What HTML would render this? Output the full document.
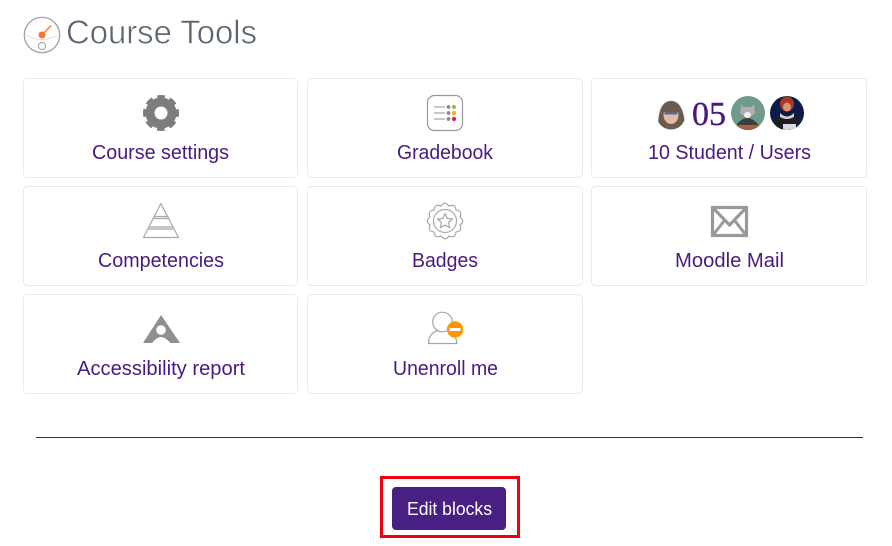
<!DOCTYPE html>
<html><head><meta charset="utf-8"><style>
html,body{margin:0;padding:0;background:#fff;width:892px;height:546px;overflow:hidden}
svg{display:block}
.l{font-family:"Liberation Sans",sans-serif;font-size:20px;fill:#4a1a80}
.c{fill:#fff;stroke:#eaeaea;stroke-width:1}
.i{fill:none;stroke:#a8a8a8;stroke-width:1.2;stroke-linejoin:round}
</style></head><body>
<svg width="892" height="546" viewBox="0 0 892 546" xmlns="http://www.w3.org/2000/svg">
<!-- heading icon -->
<circle cx="42" cy="35" r="17.7" fill="#fff" stroke="#a5a5a5" stroke-width="1.4"/>
<path d="M26 35 Q42 44 58 35" fill="none" stroke="#dcdcdc" stroke-width="1"/>
<circle cx="42" cy="46" r="3.6" fill="none" stroke="#a5a5a5" stroke-width="1.1"/>
<path d="M42 35 L51 25.500" stroke="#ff8a50" stroke-width="1.7"/>
<circle cx="42" cy="35" r="3.500" fill="#ff7433"/>
<text x="66" y="43.500" font-family="'Liberation Sans',sans-serif" font-size="33" fill="#5a6571" stroke="#fff" stroke-width="0.6" textLength="191" lengthAdjust="spacingAndGlyphs">Course Tools</text>

<!-- cards -->
<rect class="c" x="23.5" y="78.5" width="274" height="99" rx="4"/>
<rect class="c" x="307.5" y="78.5" width="275" height="99" rx="4"/>
<rect class="c" x="591.5" y="78.5" width="275" height="99" rx="4"/>
<rect class="c" x="23.5" y="186.5" width="274" height="99" rx="4"/>
<rect class="c" x="307.5" y="186.5" width="275" height="99" rx="4"/>
<rect class="c" x="591.5" y="186.5" width="275" height="99" rx="4"/>
<rect class="c" x="23.5" y="294.5" width="274" height="99" rx="4"/>
<rect class="c" x="307.5" y="294.5" width="275" height="99" rx="4"/>

<!-- labels -->
<text class="l" x="92" y="159" textLength="137" lengthAdjust="spacingAndGlyphs">Course settings</text>
<text class="l" x="397" y="159" textLength="96" lengthAdjust="spacingAndGlyphs">Gradebook</text>
<text class="l" x="648" y="159" textLength="163" lengthAdjust="spacingAndGlyphs">10 Student / Users</text>
<text class="l" x="98" y="267" textLength="126" lengthAdjust="spacingAndGlyphs">Competencies</text>
<text class="l" x="412" y="267" textLength="66" lengthAdjust="spacingAndGlyphs">Badges</text>
<text class="l" x="675" y="267" textLength="109" lengthAdjust="spacingAndGlyphs">Moodle Mail</text>
<text class="l" x="77" y="375" textLength="168" lengthAdjust="spacingAndGlyphs">Accessibility report</text>
<text class="l" x="393" y="375" textLength="105" lengthAdjust="spacingAndGlyphs">Unenroll me</text>

<!-- gear -->
<g transform="translate(161 113)" fill="none" stroke="#7d7d7d">
<circle r="11" stroke-width="9"/>
<circle r="16" stroke-width="4" stroke-dasharray="7.6 4.97" stroke-dashoffset="3.8" transform="rotate(-90)"/>
</g>

<!-- gradebook -->
<rect x="427.5" y="95.5" width="35" height="35" rx="7" fill="#fff" stroke="#999" stroke-width="1.2"/>
<path d="M434 107h11M434 113h11M434 119h11" stroke="#a8a8a8" stroke-width="1.3"/>
<circle cx="448.500" cy="107" r="1.900" fill="#8a8a8a"/><circle cx="448.500" cy="113" r="1.900" fill="#8a8a8a"/><circle cx="448.500" cy="119" r="1.900" fill="#8a8a8a"/>
<circle cx="454" cy="107" r="2.100" fill="#8cc63f"/><circle cx="454" cy="113" r="2.100" fill="#ffa726"/><circle cx="454" cy="119" r="2.100" fill="#f0145a"/>

<!-- users -->
<clipPath id="a1"><circle cx="671" cy="115" r="14.500"/></clipPath>
<g clip-path="url(#a1)">
<rect x="655" y="99" width="32" height="32" fill="#f7f5f3"/>
<path d="M658 128 Q658 101 671 101 Q684 101 685 128Z" fill="#6b5a4e"/>
<ellipse cx="671" cy="115" rx="7.500" ry="9" fill="#e2bba6"/>
<path d="M664 108 Q671 103 678 109 L678 112 L664 112Z" fill="#6b5a4e"/>
<rect x="664.500" y="112" width="13" height="2.500" fill="#5a6a8a"/>
<path d="M658 131 Q671 122 684 131Z" fill="#6a5f60"/>
</g>
<text x="692" y="125" font-family="'Liberation Serif',serif" font-size="34" fill="#4a1a80" stroke="#4a1a80" stroke-width="0.4" textLength="34" lengthAdjust="spacingAndGlyphs">05</text>
<circle cx="748" cy="113" r="17" fill="#6f9a8c"/>
<clipPath id="a2"><circle cx="748" cy="113" r="17"/></clipPath>
<g clip-path="url(#a2)">
<path d="M737 124 Q747 112 758 124 V130 H737Z" fill="#3b3f3e"/>
<path d="M741 104 L743 107 H751 L754 104 L755 113 Q748 121 740 113Z" fill="#b3aeab"/>
<ellipse cx="747.500" cy="115" rx="3.500" ry="3" fill="#f0f0f0"/>
<rect x="730" y="125" width="36" height="6" fill="#a5623f"/>
</g>
<circle cx="787" cy="113" r="17" fill="#0d1a4a"/>
<clipPath id="a3"><circle cx="787" cy="113" r="17"/></clipPath>
<g clip-path="url(#a3)">
<path d="M776 131 V117 Q787 111 798 117 V131Z" fill="#1c1c22"/>
<path d="M780 113 Q787 120 794 113 V117 Q787 121 780 117Z" fill="#cfcfd4"/>
<ellipse cx="787" cy="104" rx="7" ry="7.500" fill="#a83a22"/>
<ellipse cx="787" cy="107" rx="4" ry="4.500" fill="#d9957c"/>
<rect x="783" y="124" width="13" height="6" fill="#d8d8e2"/>
</g>

<!-- competencies -->
<path class="i" d="M160.800 203.500 L178.500 237.500 H143.500Z"/>
<path class="i" d="M153.500 216.500 H168.500 M152.500 218.500 H169.500 M148.500 227 H173.500 M147.500 229 H174.500"/>

<!-- badges -->
<g transform="translate(445 221)">
<path class="i" stroke-width="1" d="M-4.010 -14.970 Q0 -20.500 4.010 -14.970 Q10.250 -17.750 10.960 -10.960 Q17.750 -10.250 14.970 -4.010 Q20.500 0 14.970 4.010 Q17.750 10.250 10.960 10.960 Q10.250 17.750 4.010 14.970 Q0 20.500 -4.010 14.970 Q-10.250 17.750 -10.960 10.960 Q-17.750 10.250 -14.970 4.010 Q-20.500 0 -14.970 -4.010 Q-17.750 -10.250 -10.960 -10.960 Q-10.250 -17.750 -4.010 -14.970Z"/>
<circle class="i" r="11.500" stroke-width="1"/>
<path class="i" stroke-width="1" d="M0-7.500 L2.200-2.600 7.500-2 3.500 1.500 4.600 6.700 0 4-4.600 6.700-3.500 1.500-7.500-2-2.200-2.600Z"/>
</g>

<!-- mail -->
<rect x="712.500" y="207.500" width="34" height="28" fill="none" stroke="#999" stroke-width="3.200"/>
<path d="M713.500 208.500 L729.500 225 L745.500 208.500" fill="none" stroke="#999" stroke-width="3.200"/>
<path d="M713.500 234.500 L724 221 M745.500 234.500 L735 221" fill="none" stroke="#999" stroke-width="3"/>

<!-- accessibility -->
<path d="M161 315 L180 343 H170.500 Q165 337 161 337 Q157 337 152 343 H143Z" fill="#8f8f8f"/>
<circle cx="161" cy="330" r="4.800" fill="#fff"/>

<!-- unenroll -->
<path d="M428.500 343.500 Q428.500 333 439 330 H446 Q456 333 457 343.500Z" fill="#fff" stroke="#a5a5a5" stroke-width="1.200"/>
<circle cx="442.500" cy="322" r="9.800" fill="#fff" stroke="#a5a5a5" stroke-width="1.200"/>
<circle cx="455" cy="329.500" r="8.200" fill="#ff9800"/>
<rect x="449.500" y="328" width="11" height="3" fill="#fff"/>

<!-- footer -->
<rect x="36" y="437" width="827" height="1" fill="#3a2468"/>
<rect x="381.500" y="477.500" width="137" height="59" fill="none" stroke="#ee0010" stroke-width="3"/>
<rect x="392" y="487" width="114" height="43" rx="4" fill="#4a1f83"/>
<text x="407" y="515" font-family="'Liberation Sans',sans-serif" font-size="18.500" fill="#fff" textLength="85" lengthAdjust="spacingAndGlyphs">Edit blocks</text>
</svg>
</body></html>
